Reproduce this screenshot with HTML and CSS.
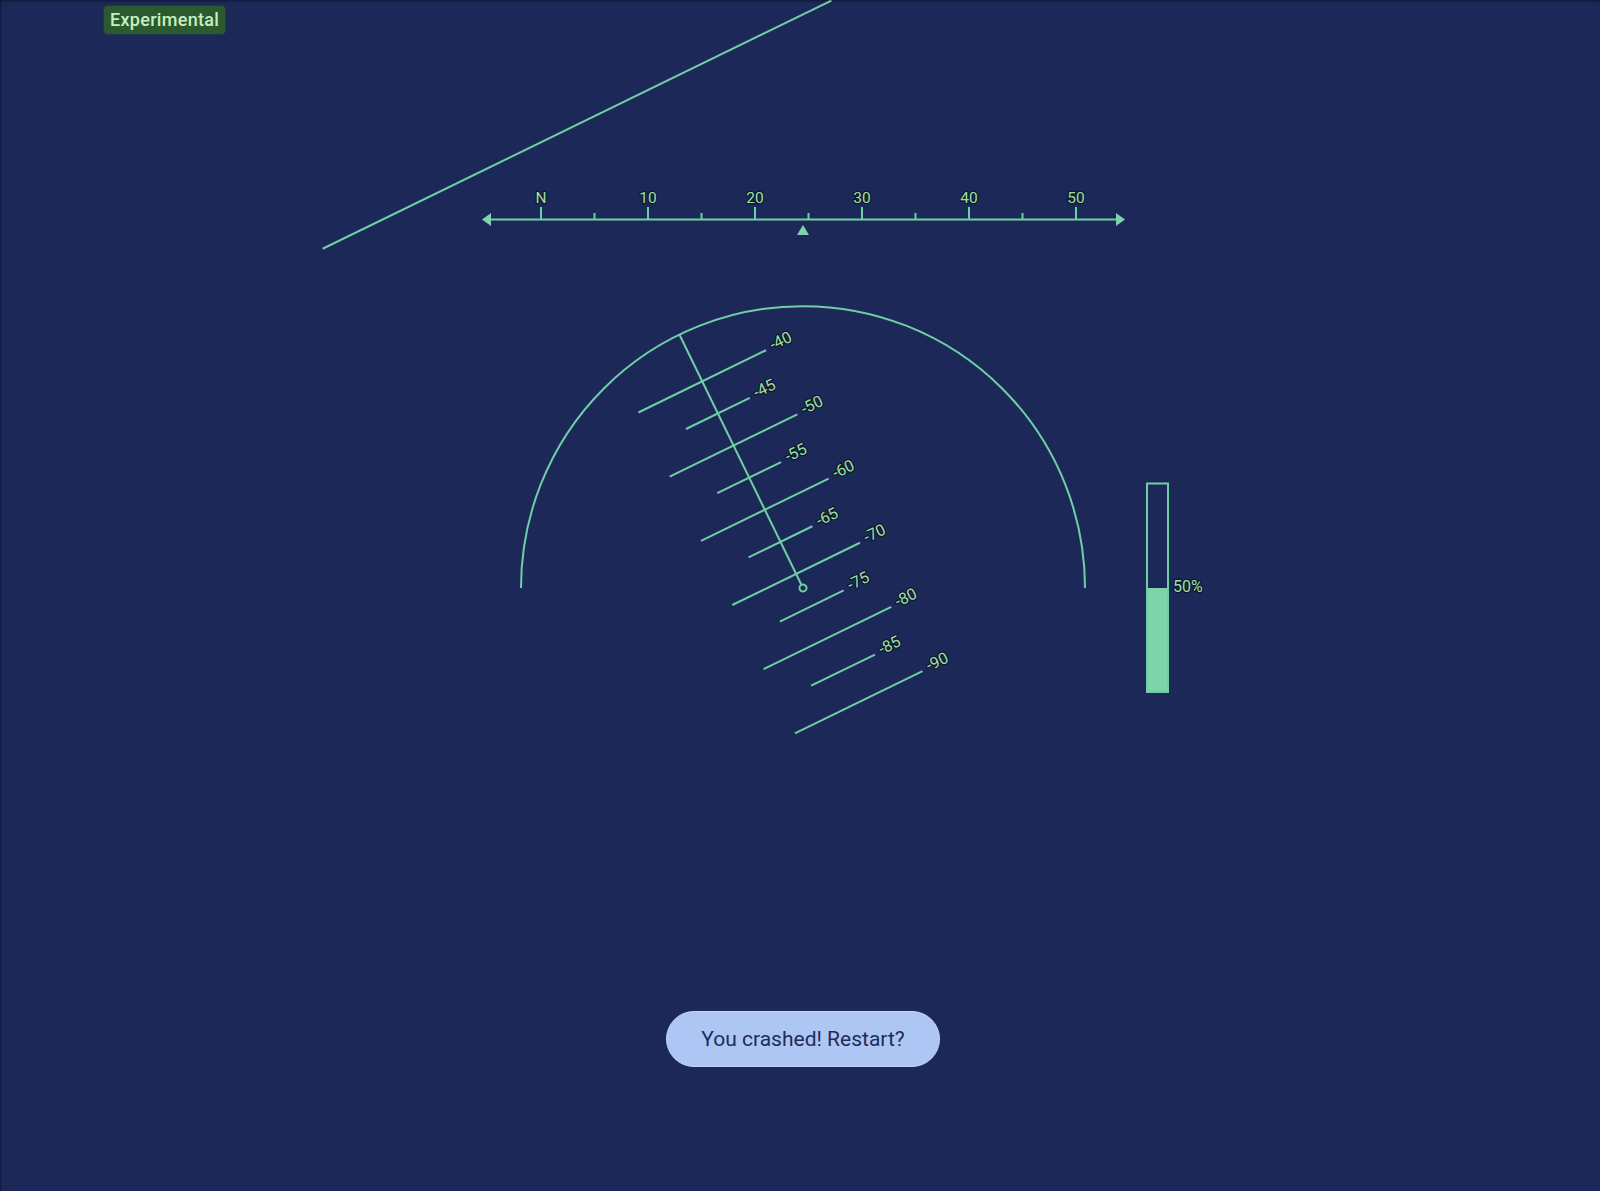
FILE: index.html
```html
<!doctype html>
<html lang="en">
  <head>
    <meta charset="UTF-8" />
    <meta name="viewport" content="width=device-width, initial-scale=1.0" />
    <title>Flight HUD</title>
    <link rel="stylesheet" href="styles.css">
  </head>
  <body>
    <div class="hud">
      <span class="badge">Experimental</span>

      <svg class="instruments" width="1600" height="1191" viewBox="0 0 1600 1191">
        <!-- heading tape -->
        <g class="heading">
          <line class="stroke" x1="484" y1="219.5" x2="1118" y2="219.5" />
          <polygon class="solid" points="482,219.5 491,213 491,226" />
          <polygon class="solid" points="1125,219.5 1116,213 1116,226" />

          <line class="stroke" x1="541" y1="207" x2="541" y2="219" />
          <line class="stroke" x1="648" y1="207" x2="648" y2="219" />
          <line class="stroke" x1="755" y1="207" x2="755" y2="219" />
          <line class="stroke" x1="862" y1="207" x2="862" y2="219" />
          <line class="stroke" x1="969" y1="207" x2="969" y2="219" />
          <line class="stroke" x1="1076" y1="207" x2="1076" y2="219" />

          <line class="stroke" x1="594.5" y1="213" x2="594.5" y2="219" />
          <line class="stroke" x1="701.5" y1="213" x2="701.5" y2="219" />
          <line class="stroke" x1="808.5" y1="213" x2="808.5" y2="219" />
          <line class="stroke" x1="915.5" y1="213" x2="915.5" y2="219" />
          <line class="stroke" x1="1022.5" y1="213" x2="1022.5" y2="219" />

          <text class="label mid" x="541" y="203">N</text>
          <text class="label mid" x="648" y="203">10</text>
          <text class="label mid" x="755" y="203">20</text>
          <text class="label mid" x="862" y="203">30</text>
          <text class="label mid" x="969" y="203">40</text>
          <text class="label mid" x="1076" y="203">50</text>

          <polygon class="solid" points="803,225 797,235 809,235" />
        </g>

        <!-- roll arc -->
        <path class="stroke" d="M 521 588 A 282 282 0 0 1 1085 588" />

        <!-- pitch ladder, rolled -26deg around the aircraft centre -->
        <g transform="translate(803 588) rotate(-26)">
          <line class="stroke" x1="-283" y1="-515.5" x2="283" y2="-515.5" />

          <line class="stroke" x1="-71" y1="-229.9" x2="71" y2="-229.9" />
          <line class="stroke" x1="-35.5" y1="-194.2" x2="35.5" y2="-194.2" />
          <line class="stroke" x1="-71" y1="-158.5" x2="71" y2="-158.5" />
          <line class="stroke" x1="-35.5" y1="-122.8" x2="35.5" y2="-122.8" />
          <line class="stroke" x1="-71" y1="-87.1" x2="71" y2="-87.1" />
          <line class="stroke" x1="-35.5" y1="-51.4" x2="35.5" y2="-51.4" />
          <line class="stroke" x1="-71" y1="-15.7" x2="71" y2="-15.7" />
          <line class="stroke" x1="-35.5" y1="20" x2="35.5" y2="20" />
          <line class="stroke" x1="-71" y1="55.7" x2="71" y2="55.7" />
          <line class="stroke" x1="-35.5" y1="91.4" x2="35.5" y2="91.4" />
          <line class="stroke" x1="-71" y1="127.1" x2="71" y2="127.1" />

          <text class="label small" x="77" y="-230.9">-40</text>
          <text class="label small" x="41.5" y="-195.2">-45</text>
          <text class="label small" x="77" y="-159.5">-50</text>
          <text class="label small" x="41.5" y="-123.8">-55</text>
          <text class="label small" x="77" y="-88.1">-60</text>
          <text class="label small" x="41.5" y="-52.4">-65</text>
          <text class="label small" x="77" y="-16.7">-70</text>
          <text class="label small" x="41.5" y="19">-75</text>
          <text class="label small" x="77" y="54.7">-80</text>
          <text class="label small" x="41.5" y="90.4">-85</text>
          <text class="label small" x="77" y="126.1">-90</text>

          <line class="stroke" x1="0" y1="0" x2="0" y2="-282" />
          <circle class="hub" cx="0" cy="0" r="3.5" />
        </g>

        <!-- throttle gauge -->
        <rect class="solid" x="1147" y="588" width="21" height="104" />
        <rect class="stroke" x="1147" y="483.5" width="21" height="208.5" />
        <text class="label side" x="1173" y="588">50%</text>
      </svg>

      <div class="controls">
        <button class="restart" type="button">You crashed! Restart?</button>
      </div>
    </div>
  </body>
</html>
```

FILE: styles.css
```css
body {
  margin: 0;
  background-color: #1c2958;
  font-family: Roboto, "Noto Sans", sans-serif;
  overflow: hidden;
}

.hud {
  position: relative;
  height: 100vh;
  box-sizing: border-box;
  padding: 0 0 124px 6px;
  display: flex;
  flex-direction: column;
  justify-content: flex-end;
  align-items: center;
  box-shadow: inset 0 3px 3px -2px rgba(10, 16, 40, 0.7), inset 2px 0 2px -1px rgba(10, 16, 40, 0.6);
}

.badge {
  position: absolute;
  top: 6px;
  left: 104px;
  padding: 4px 6px 4px 6px;
  border-radius: 4px;
  background-color: #2a5a2d;
  color: #c7efbf;
  font-size: 18px;
  font-weight: 500;
  letter-spacing: 0.3px;
  line-height: 20px;
  box-shadow: 0 0 2px rgba(60, 120, 60, 0.6);
}

.instruments {
  position: absolute;
  top: 0;
  left: 0;
}

.stroke {
  fill: none;
  stroke: #6fcfa4;
  stroke-width: 2;
}

.solid {
  fill: #7fd3aa;
}

.hub {
  fill: #1c2958;
  stroke: #6fcfa4;
  stroke-width: 2;
}

.label {
  fill: #9fe0a0;
  font-family: Roboto, "DejaVu Sans", sans-serif;
  font-size: 15.5px;
  stroke: #0e1730;
  stroke-width: 2.5px;
  stroke-linejoin: round;
  paint-order: stroke;
}

.label.mid {
  text-anchor: middle;
}

.label.small {
  font-size: 16px;
  dominant-baseline: middle;
}

.label.side {
  font-size: 16px;
  dominant-baseline: middle;
}

.controls {
  display: flex;
  justify-content: center;
  position: relative;
}

.restart {
  width: 274px;
  height: 56px;
  border: 1px solid #c3d5f8;
  border-radius: 28px;
  background-color: #adc6f4;
  color: #1e2d5b;
  font-family: Roboto, "Noto Sans", sans-serif;
  font-size: 21px;
  cursor: pointer;
}
```
